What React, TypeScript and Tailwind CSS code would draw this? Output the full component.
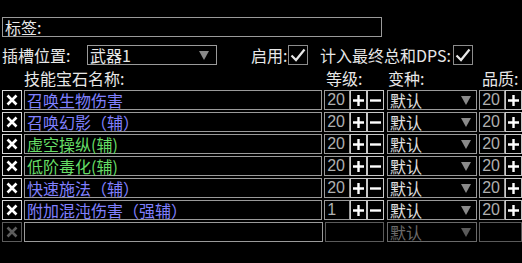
import React from "react";

const FONT = { fontFamily: '"Noto Sans CJK SC", "Noto Sans", sans-serif' };

function Arrow({ dim = false }: { dim?: boolean }) {
  return (
    <svg width="10" height="9" viewBox="0 0 10 9" className="shrink-0">
      <polygon points="0,0 10,0 5,9" fill={dim ? "#5a5a5a" : "#8a8a8a"} />
    </svg>
  );
}

function Check() {
  return (
    <div className="w-[20px] h-[20px] border border-[#8c8c8c] flex items-center justify-center">
      <svg width="16" height="14" viewBox="0 0 16 14">
        <path d="M1.5 7.5 L6 12 L14.5 1.5" stroke="#e8e8e8" strokeWidth="2.2" fill="none" />
      </svg>
    </div>
  );
}

function XBtn({ dim = false }: { dim?: boolean }) {
  const c = dim ? "#5c5c5c" : "#ffffff";
  return (
    <div
      className={`w-[20px] h-[20px] border flex items-center justify-center shrink-0 ${dim ? "border-[#5c5c5c]" : "border-[#d8d8d8]"}`}
    >
      <svg width="12" height="12" viewBox="0 0 12 12">
        <path d="M1.5 1.5 L10.5 10.5 M10.5 1.5 L1.5 10.5" stroke={c} strokeWidth="2.6" />
      </svg>
    </div>
  );
}

function PlusBtn() {
  return (
    <div className="w-[17px] h-[20px] border border-[#c8c8c8] flex items-center justify-center shrink-0">
      <svg width="11" height="11" viewBox="0 0 11 11">
        <path d="M5.5 0 V11 M0 5.5 H11" stroke="#ffffff" strokeWidth="2.4" />
      </svg>
    </div>
  );
}

function MinusBtn() {
  return (
    <div className="w-[17px] h-[20px] border border-[#c8c8c8] flex items-center justify-center shrink-0">
      <svg width="11" height="11" viewBox="0 0 11 11">
        <path d="M0 5.5 H11" stroke="#ffffff" strokeWidth="2.4" />
      </svg>
    </div>
  );
}

type Gem = { name: string; color: string; level: string };

const gems: Gem[] = [
  { name: "召唤生物伤害", color: "#8080ff", level: "20" },
  { name: "召唤幻影（辅）", color: "#8080ff", level: "20" },
  { name: "虚空操纵(辅)", color: "#66dd66", level: "20" },
  { name: "低阶毒化(辅)", color: "#66dd66", level: "20" },
  { name: "快速施法（辅）", color: "#8080ff", level: "20" },
  { name: "附加混沌伤害（强辅）", color: "#8080ff", level: "1" },
];

function GemRow({ gem }: { gem: Gem }) {
  return (
    <div className="flex h-[20px] items-center">
      <div className="ml-[2px]">
        <XBtn />
      </div>
      <div
        className="ml-[2px] w-[301px] h-[20px] border border-[#9a9a9a] flex items-center pl-[2px] text-[16px] leading-none"
        style={{ color: gem.color }}
      >
        {gem.name}
      </div>
      <div className="ml-[2px] w-[26px] h-[20px] border border-[#9a9a9a] flex items-center pl-[2px] text-[16px] leading-none text-[#b0b0b0]"
        style={{ fontFamily: '"Liberation Sans", sans-serif' }}>
        {gem.level}
      </div>
      <PlusBtn />
      <MinusBtn />
      <div className="ml-[3px] w-[91px] h-[20px] border border-[#9a9a9a] flex items-center justify-between pl-[2px] pr-[5px] text-[16px] leading-none text-[#e0e0e0]">
        <span>默认</span>
        <Arrow />
      </div>
      <div className="ml-[2px] w-[26px] h-[20px] border border-[#9a9a9a] flex items-center pl-[2px] text-[16px] leading-none text-[#b0b0b0]"
        style={{ fontFamily: '"Liberation Sans", sans-serif' }}>
        20
      </div>
      <PlusBtn />
    </div>
  );
}

export default function App() {
  return (
    <div className="w-[522px] h-[263px] bg-black text-[#e8e8e8] overflow-hidden pt-[17px]" style={FONT}>
      <div className="ml-[2px] w-[380px] h-[20px] border border-[#9a9a9a] flex items-center pl-[2px] text-[16px] leading-none">
        标签:
      </div>
      <div className="mt-[8px] h-[20px] flex items-center text-[16px] leading-none">
        <span className="ml-[2px] w-[85px]">插槽位置:</span>
        <div className="w-[130px] h-[20px] border border-[#9a9a9a] flex items-center justify-between pl-[2px] pr-[7px]">
          <span>武器1</span>
          <Arrow />
        </div>
        <span className="ml-[34px] w-[37px]">启用:</span>
        <Check />
        <span className="ml-[12px] w-[133px]">计入最终总和DPS:</span>
        <Check />
      </div>
      <div className="h-[25px] flex items-center text-[16px] leading-none">
        <span className="ml-[24px] w-[302px]">技能宝石名称:</span>
        <span className="w-[62px]">等级:</span>
        <span className="w-[94px]">变种:</span>
        <span>品质:</span>
      </div>
      <div className="flex flex-col gap-[2px]">
        {gems.map((g, i) => (
          <GemRow key={i} gem={g} />
        ))}
        <div className="flex h-[20px] items-center">
          <div className="ml-[2px]">
            <XBtn dim />
          </div>
          <div className="ml-[2px] w-[301px] h-[20px] border border-[#9a9a9a]" />
          <div className="ml-[2px] w-[60px] h-[20px] border border-[#5a5a5a]" />
          <div className="ml-[3px] w-[91px] h-[20px] border border-[#6a6a6a] flex items-center justify-between pl-[2px] pr-[5px] text-[16px] leading-none text-[#6a6a6a]">
            <span>默认</span>
            <Arrow dim />
          </div>
          <div className="ml-[2px] w-[43px] h-[20px] border border-[#5a5a5a]" />
        </div>
      </div>
    </div>
  );
}
